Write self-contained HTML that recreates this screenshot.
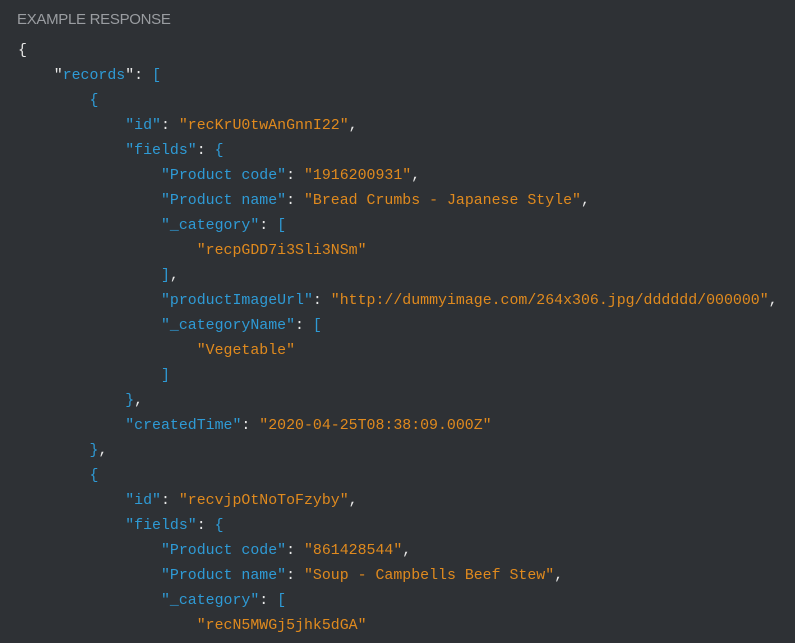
<!DOCTYPE html>
<html><head><style>
html,body{margin:0;padding:0;background:#2e3135;width:795px;height:643px;overflow:hidden}
.h{position:absolute;left:17px;top:11px;font:15px "Liberation Sans",sans-serif;color:#9a9da1;letter-spacing:-0.3px}
pre{position:absolute;left:18px;top:39px;margin:0;font:14.9px/25px "Liberation Mono",monospace;color:#e8e8e8}
.k{color:#2e9bd6}.s{color:#e08a1e}.b{color:#2e9bd6}
</style></head><body>
<div class="h">EXAMPLE RESPONSE</div>
<pre>{
    "<span class="k">records</span>": <span class="b">[</span>
        <span class="b">{</span>
            <span class="k">"id"</span>: <span class="s">"recKrU0twAnGnnI22"</span>,
            <span class="k">"fields"</span>: <span class="b">{</span>
                <span class="k">"Product code"</span>: <span class="s">"1916200931"</span>,
                <span class="k">"Product name"</span>: <span class="s">"Bread Crumbs - Japanese Style"</span>,
                <span class="k">"_category"</span>: <span class="b">[</span>
                    <span class="s">"recpGDD7i3Sli3NSm"</span>
                <span class="b">]</span>,
                <span class="k">"productImageUrl"</span>: <span class="s">"http://dummyimage.com/264x306.jpg/dddddd/000000"</span>,
                <span class="k">"_categoryName"</span>: <span class="b">[</span>
                    <span class="s">"Vegetable"</span>
                <span class="b">]</span>
            <span class="b">}</span>,
            <span class="k">"createdTime"</span>: <span class="s">"2020-04-25T08:38:09.000Z"</span>
        <span class="b">}</span>,
        <span class="b">{</span>
            <span class="k">"id"</span>: <span class="s">"recvjpOtNoToFzyby"</span>,
            <span class="k">"fields"</span>: <span class="b">{</span>
                <span class="k">"Product code"</span>: <span class="s">"861428544"</span>,
                <span class="k">"Product name"</span>: <span class="s">"Soup - Campbells Beef Stew"</span>,
                <span class="k">"_category"</span>: <span class="b">[</span>
                    <span class="s">"recN5MWGj5jhk5dGA"</span>
</pre>
</body></html>
